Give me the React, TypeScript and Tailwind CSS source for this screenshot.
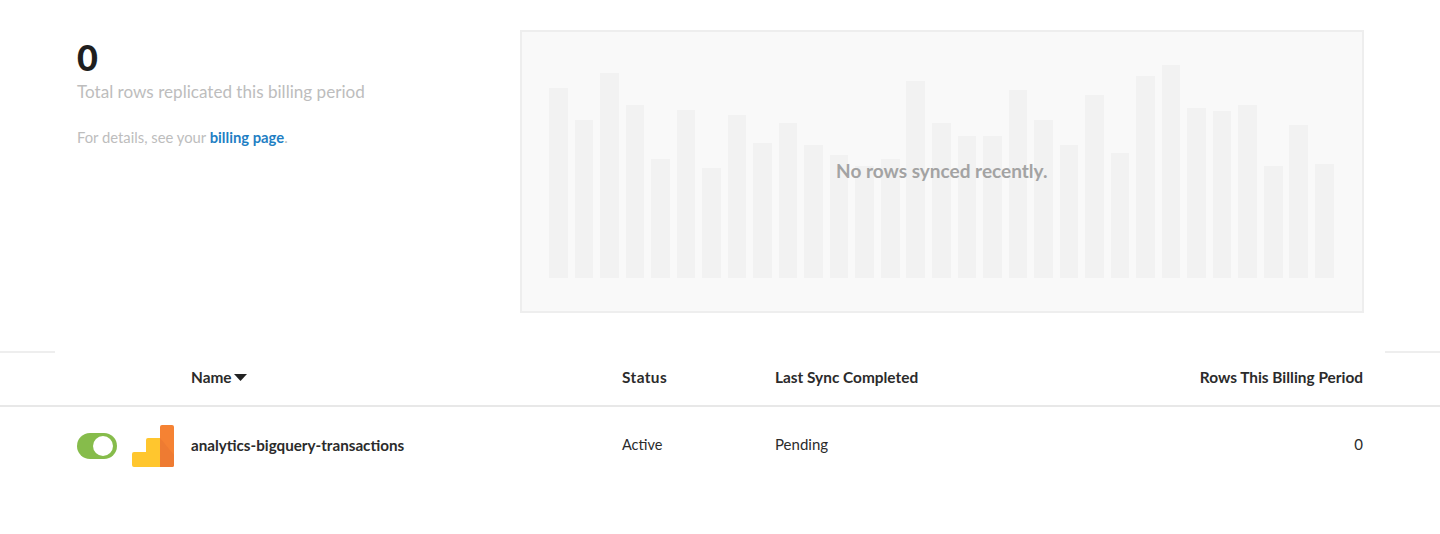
import React from "react";

const BAR_TOPS = [
  88, 120, 73, 105, 159, 110, 168, 115, 143, 123, 145, 155, 166, 159, 81, 123,
  136, 136, 90, 120, 145, 95, 153, 76, 65, 108, 111, 105, 166, 125, 164,
];
const CHART_BOTTOM = 278;

const AnalyticsLogo = () => (
  <svg width="42" height="42" viewBox="0 0 42 42" fill="none" className="block">
    <path d="M28 2a2 2 0 0 1 2-2h10a2 2 0 0 1 2 2v38a2 2 0 0 1-2 2H28z" fill="#F58233" />
    <path d="M28 13l14 17v10a2 2 0 0 1-2 2H28z" fill="#EE7B32" />
    <path
      d="M16 13h12v29H2a2 2 0 0 1-2-2V29a2 2 0 0 1 2-2h12V15a2 2 0 0 1 2-2z"
      fill="#FFC62E"
    />
  </svg>
);

const App = () => {
  return (
    <div className="w-[1440px] h-[534px] bg-white font-['Lato',sans-serif] text-[#2b2b2b] overflow-hidden">
      <div className="flex pt-[30px] pl-[77px]">
        <div className="w-[443px] shrink-0">
          <div className="text-[36px] leading-[54px] font-black text-[#1f1f1f]">0</div>
          <div className="text-[17.1px] leading-[24px] -mt-[4px] text-[#bdbdbd]">
            Total rows replicated this billing period
          </div>
          <div className="mt-[23px] text-[14.8px] leading-[20px] text-[#bdbdbd]">
            For details, see your{" "}
            <span className="font-bold text-[#1f7fc4]">billing page</span>.
          </div>
        </div>
        <div className="relative w-[843.5px] h-[283px] border-2 border-[#eeeeee] bg-[#f9f9f9] pl-[27px] pr-[28px]">
          <div className="flex items-end gap-[6.9px] h-[246px]">
            {BAR_TOPS.map((top, i) => (
              <div
                key={i}
                className="flex-1 bg-[#f2f2f2]"
                style={{ height: CHART_BOTTOM - top }}
              />
            ))}
          </div>
          <div className="absolute inset-0 flex items-center justify-center text-[19px] font-bold text-[#a3a3a3]">
            No rows synced recently.
          </div>
        </div>
      </div>

      <div className="mt-[38px] flex justify-between">
        <div className="w-[55px] h-[2px] bg-[#eeeeee]" />
        <div className="w-[55px] h-[2px] bg-[#eeeeee]" />
      </div>

      <div className="h-[54px] pb-[2px] border-b-2 border-[#e8e8e8] px-[77px] grid grid-cols-[114px_431px_153px_1fr_auto] items-center text-[15.4px] font-bold text-[#2b2b2b]">
        <div />
        <div className="flex items-center">
          Name
          <svg width="13" height="7" viewBox="0 0 13 7" className="ml-[2px]">
            <path d="M0 0h13L6.5 7z" fill="#222222" />
          </svg>
        </div>
        <div className="tracking-[0.4px]">Status</div>
        <div>Last Sync Completed</div>
        <div className="text-right">Rows This Billing Period</div>
      </div>

      <div className="h-[76px] px-[77px] grid grid-cols-[114px_431px_153px_1fr_auto] items-center text-[15px]">
        <div className="flex items-center mt-[2px]">
          <div className="w-[40px] h-[26px] rounded-full bg-[#86bc4b] flex items-center justify-end pr-[4px]">
            <div className="w-[20px] h-[20px] rounded-full bg-white" />
          </div>
          <div className="ml-[15px]">
            <AnalyticsLogo />
          </div>
        </div>
        <div className="font-bold text-[15.2px]">analytics-bigquery-transactions</div>
        <div className="text-[14.5px]">Active</div>
        <div className="pb-[2px]">Pending</div>
        <div className="text-right pb-[2px]">0</div>
      </div>
    </div>
  );
};

export default App;
